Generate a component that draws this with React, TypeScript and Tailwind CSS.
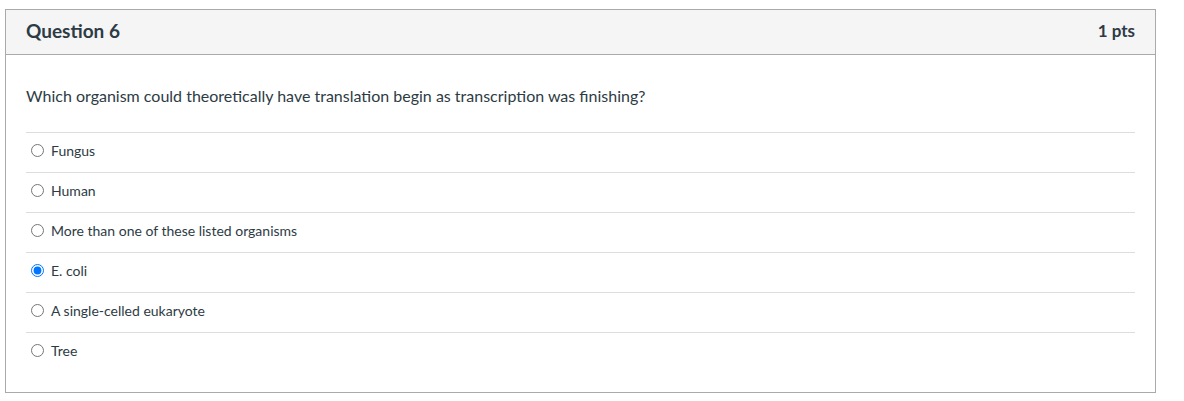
import React from "react";

const options = [
  { label: "Fungus", checked: false },
  { label: "Human", checked: false },
  { label: "More than one of these listed organisms", checked: false },
  { label: "E. coli", checked: true },
  { label: "A single-celled eukaryote", checked: false },
  { label: "Tree", checked: false },
];

export default function App() {
  return (
    <div className="w-[1184px] h-[401px] bg-white pt-[9px] pl-[5px]" style={{ fontFamily: "Lato, 'Liberation Sans', sans-serif" }}>
      <div className="w-[1151px] border border-[#aaaaaa] text-[#2d3b45]">
        <div className="h-[45px] bg-[#f5f5f5] border-b border-[#aaaaaa] flex items-center justify-between px-5 pb-[3px]">
          <h2 className="text-[19px] font-bold leading-none">Question 6</h2>
          <div className="text-[17px] font-bold leading-none">1 pts</div>
        </div>
        <div className="px-5 pt-[31px] pb-[20px]">
          <p className="text-[16px] leading-[20px] h-[46px]">
            Which organism could theoretically have translation begin as transcription was finishing?
          </p>
          <div>
            {options.map((o) => (
              <label key={o.label} className="h-[40px] border-t border-[#dddddd] flex items-center pb-[4px]">
                <input
                  type="radio"
                  name="q6"
                  checked={o.checked}
                  onChange={() => {}}
                  className="w-[13px] h-[13px] ml-[5px] mr-[7px] m-0 accent-[#0075ff]"
                />
                <span className="text-[14px] leading-none">{o.label}</span>
              </label>
            ))}
          </div>
        </div>
      </div>
    </div>
  );
}
